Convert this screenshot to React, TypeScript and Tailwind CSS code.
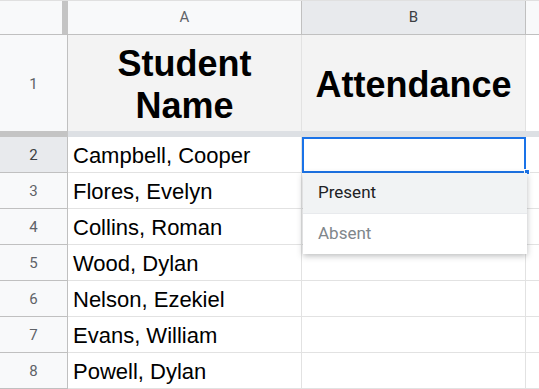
import React from "react";

const names = [
  "Campbell, Cooper",
  "Flores, Evelyn",
  "Collins, Roman",
  "Wood, Dylan",
  "Nelson, Ezekiel",
  "Evans, William",
  "Powell, Dylan",
];

const arial = { fontFamily: '"Liberation Sans", Arial, sans-serif' };

export default function App() {
  return (
    <div className="w-[539px] h-[389px] overflow-hidden bg-white font-['Roboto',sans-serif]">
      {/* column headers */}
      <div className="flex h-[35px] border-t border-b border-t-[#e0e0e0] border-b-[#c0c0c0]">
        <div className="w-[68px] flex bg-[#f8f9fa]">
          <div className="w-[62px]" />
          <div className="w-[6px] bg-[#c4c4c4]" />
        </div>
        <div className="w-[234px] flex items-center justify-center bg-[#f8f9fa] border-r border-[#c0c0c0] text-[15px] text-[#5f6368]">
          A
        </div>
        <div className="w-[224px] flex items-center justify-center bg-[#e8eaed] border-r border-[#c0c0c0] text-[15px] text-[#3c4043]">
          B
        </div>
        <div className="flex-1 bg-[#f8f9fa]" />
      </div>

      {/* row 1 */}
      <div className="flex h-[96px]">
        <div className="w-[68px] flex items-center justify-center pt-[3px] bg-[#f8f9fa] border-r border-[#c0c0c0] text-[15px] text-[#5f6368]">
          1
        </div>
        <div
          style={arial}
          className="w-[234px] flex items-center justify-center pt-[4px] bg-[#f3f3f3] border-r border-[#e2e2e2] text-[36px] leading-[42px] font-bold text-black text-center"
        >
          Student
          <br />
          Name
        </div>
        <div
          style={arial}
          className="w-[224px] flex items-center justify-center pt-[4px] bg-[#f3f3f3] border-r border-[#e2e2e2] text-[36px] leading-[42px] font-bold text-black"
        >
          Attendance
        </div>
        <div className="flex-1 bg-white" />
      </div>

      {/* frozen divider */}
      <div className="flex h-[6px]">
        <div className="w-[68px] bg-[#c4c4c4]" />
        <div className="flex-1 bg-[#dde0e4]" />
      </div>

      {names.map((n, i) => (
        <div key={n} className="flex h-[36px]">
          <div
            className={`w-[68px] flex items-center justify-center pt-[2px] border-r border-b border-[#c0c0c0] text-[15px] ${
              i === 0 ? "bg-[#e8eaed] text-[#3c4043]" : "bg-[#f8f9fa] text-[#5f6368]"
            }`}
          >
            {i + 2}
          </div>
          <div
            style={arial}
            className="w-[234px] flex items-center pl-[5px] pt-[1px] border-r border-b border-[#e2e2e2] text-[22px] text-black whitespace-nowrap"
          >
            {n}
          </div>
          <div className="relative w-[224px] border-r border-b border-[#e2e2e2]">
            {i === 0 && (
              <>
                <div className="absolute top-0 left-0 -right-px -bottom-px border-2 border-[#1a73e8]" />
                <div className="absolute -right-[5px] -bottom-[3px] w-[6px] h-[6px] bg-[#1a73e8] border border-white" />
                <div className="absolute top-[calc(100%+1px)] left-px w-[224px] z-10 bg-white shadow-[0_2px_6px_rgba(60,64,67,0.35)]">
                  <div className="h-[41px] flex items-center pl-[15px] bg-[#f1f3f4] text-[17px] text-[#202124] border-b border-[#e8eaed]">
                    Present
                  </div>
                  <div className="h-[40px] flex items-center pl-[15px] text-[17px] text-[#80868b]">
                    Absent
                  </div>
                </div>
              </>
            )}
          </div>
          <div className="flex-1 border-b border-[#e2e2e2]" />
        </div>
      ))}
    </div>
  );
}
